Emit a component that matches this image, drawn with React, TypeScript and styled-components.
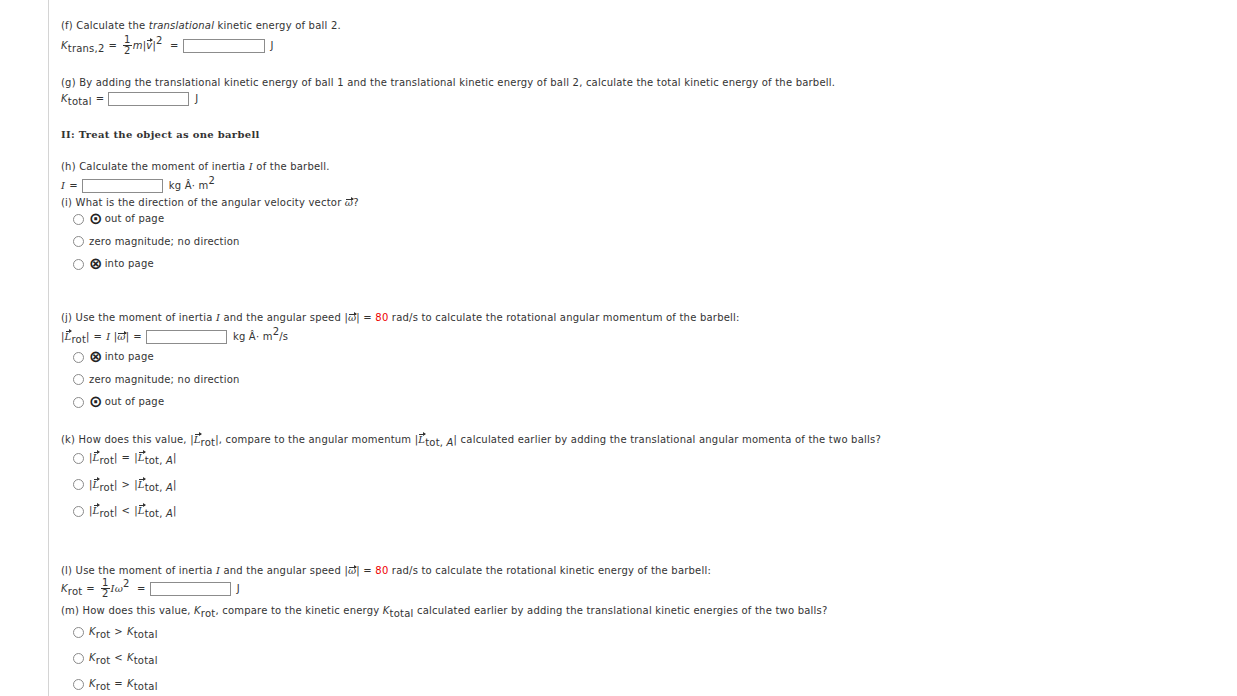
import React from 'react'
import styled, { createGlobalStyle } from 'styled-components'

//// global
const GlobalStyle = createGlobalStyle`
  html, body {
    margin: 0;
    padding: 0;
    background: #ffffff;
  }
  body {
    font-family: "DejaVu Sans", Verdana, sans-serif;
    font-size: 10px;
    letter-spacing: 0.21px;
    color: #333333;
  }
`

//// styles
const Page = styled.div`
  width: 1237px;
  height: 696px;
  overflow: hidden;
  box-sizing: border-box;
`

const Column = styled.div`
  margin-left: 48px;
  padding: 18px 0 40px 12px;
  border-left: 1px solid #d4d4d4;
  min-height: 696px;
  box-sizing: border-box;
`

const Part = styled.div<{ $mt?: number }>`
  margin-top: ${p => p.$mt ?? 0}px;
`

const Prompt = styled.div<{ $mt?: number }>`
  margin-top: ${p => p.$mt ?? 0}px;
  line-height: 16px;
  white-space: nowrap;
`

const Heading = styled.div<{ $mt?: number }>`
  margin-top: ${p => p.$mt ?? 0}px;
  font-family: "DejaVu Serif", Georgia, serif;
  font-weight: bold;
  font-size: 10px;
  letter-spacing: 0.3px;
  line-height: 16px;
`

const AnswerRow = styled.div<{ $mt?: number }>`
  margin-top: ${p => p.$mt ?? 0}px;
  line-height: 16px;
  white-space: nowrap;
`

const Eq = styled.span`
  margin: 0 4px;
`

const Input = styled.span<{ $w?: number }>`
  display: inline-block;
  width: ${p => p.$w ?? 80}px;
  height: 14px;
  box-sizing: border-box;
  border: 1px solid #8c8c8c;
  background: #fff;
  margin-right: 4px;
  vertical-align: middle;
`

const Unit = styled.span`
  margin-left: 2px;
`

const Var = styled.i`
  font-family: "DejaVu Sans", Verdana, sans-serif;
  font-style: italic;
`

const SerifVar = styled.i`
  font-family: "DejaVu Serif", Georgia, serif;
  font-style: italic;
`

const Sub = styled.sub`
  font-size: 10px;
  vertical-align: -3px;
  line-height: 0;
`

const Sup = styled.sup`
  font-size: 10px;
  vertical-align: 5px;
  line-height: 0;
`

const Red = styled.span`
  color: #ee0000;
`

const Frac = styled.span`
  display: inline-flex;
  flex-direction: column;
  align-items: center;
  font-size: 10px;
  line-height: 10px;
  margin: 0 1px 0 2px;
  vertical-align: middle;
`

const FracTop = styled.span`
  border-bottom: 1px solid #333;
  padding: 0 1px;
`

const Vec = styled.span<{ $lift?: number }>`
  position: relative;
  display: inline-block;
  line-height: 10px;
  &::before {
    content: '';
    position: absolute;
    left: 1px;
    right: 0;
    top: ${p => -1 + (p.$lift ?? 0)}px;
    height: 1px;
    background: #333;
  }
  &::after {
    content: '';
    position: absolute;
    right: -1px;
    top: ${p => -3 + (p.$lift ?? 0)}px;
    border-left: 3px solid #333;
    border-top: 2.5px solid transparent;
    border-bottom: 2.5px solid transparent;
  }
`

const Options = styled.div<{ $gap: number; $mt?: number }>`
  margin-top: ${p => p.$mt ?? 0}px;
  display: flex;
  flex-direction: column;
  gap: ${p => p.$gap}px;
  padding-left: 12px;
`

const Option = styled.label`
  display: flex;
  align-items: center;
  line-height: 16px;
  white-space: nowrap;
`

const OptionText = styled.span`
  display: inline-block;
`

const Radio = styled.span`
  width: 11px;
  height: 11px;
  box-sizing: border-box;
  border-radius: 50%;
  border: 1px solid #8a8a8a;
  background: #fff;
  margin-right: 5px;
  flex: 0 0 auto;
`

const DirGlyph = styled.span`
  font-size: 16px;
  font-weight: bold;
  line-height: 14px;
  margin-right: 2px;
  color: #222;
  vertical-align: -2px;
`

//// pieces
const Omega = () => (
  <Vec $lift={2}>
    <SerifVar>ω</SerifVar>
  </Vec>
)

const Lvec = () => (
  <Vec>
    <SerifVar>L</SerifVar>
  </Vec>
)

const Lrot = () => (
  <>
    |<Lvec />
    <Sub>rot</Sub>|
  </>
)

const LtotA = () => (
  <>
    |<Lvec />
    <Sub>
      tot, <Var>A</Var>
    </Sub>
    |
  </>
)

const Krot = () => (
  <>
    <Var>K</Var>
    <Sub>rot</Sub>
  </>
)

const Ktotal = () => (
  <>
    <Var>K</Var>
    <Sub>total</Sub>
  </>
)

const DirectionOptions: React.FC<{ order: ('out' | 'zero' | 'into')[]; mt: number }> = ({
  order,
  mt,
}) => (
  <Options $gap={6.5} $mt={mt}>
    {order.map(o => (
      <Option key={o}>
        <Radio />
        <OptionText>
          {o === 'out' && (
            <>
              <DirGlyph>⊙</DirGlyph>out of page
            </>
          )}
          {o === 'zero' && <>zero magnitude; no direction</>}
          {o === 'into' && (
            <>
              <DirGlyph>⊗</DirGlyph>into page
            </>
          )}
        </OptionText>
      </Option>
    ))}
  </Options>
)

const App: React.FC = () => {
  return (
    <Page>
      <GlobalStyle />
      <Column>
        {/* f */}
        <Part>
          <Prompt>
            (f) Calculate the <i>translational</i> kinetic energy of ball 2.
          </Prompt>
          <AnswerRow $mt={1}>
            <Var>K</Var>
            <Sub>trans,2</Sub>
            <Eq>=</Eq>
            <Frac>
              <FracTop>1</FracTop>
              <span>2</span>
            </Frac>
            <Var>m</Var>|<Vec>
              <Var>v</Var>
            </Vec>
            |<Sup>2</Sup>
            <Eq> =</Eq>
            <Input $w={82} />
            <Unit>J</Unit>
          </AnswerRow>
        </Part>

        {/* g */}
        <Part $mt={19}>
          <Prompt>
            (g) By adding the translational kinetic energy of ball 1 and the translational kinetic
            energy of ball 2, calculate the total kinetic energy of the barbell.
          </Prompt>
          <AnswerRow>
            <Ktotal />
            <Eq>=</Eq>
            <Input $w={81} />
            <Unit>J</Unit>
          </AnswerRow>
        </Part>

        <Heading $mt={20}>II: Treat the object as one barbell</Heading>

        {/* h, i */}
        <Part $mt={16}>
          <Prompt>
            (h) Calculate the moment of inertia <SerifVar>I</SerifVar> of the barbell.
          </Prompt>
          <AnswerRow $mt={3}>
            <SerifVar>I</SerifVar>
            <Eq>=</Eq>
            <Input $w={81} />
            <Unit>kg Â· m</Unit>
            <Sup>2</Sup>
          </AnswerRow>
          <Prompt $mt={1}>
            (i) What is the direction of the angular velocity vector <Omega />?
          </Prompt>
          <DirectionOptions order={['out', 'zero', 'into']} mt={0} />
        </Part>

        {/* j */}
        <Part $mt={38}>
          <Prompt>
            (j) Use the moment of inertia <SerifVar>I</SerifVar> and the angular speed |<Omega />|
            = <Red>80</Red> rad/s to calculate the rotational angular momentum of the barbell:
          </Prompt>
          <AnswerRow $mt={3}>
            <Lrot />
            <Eq>=</Eq>
            <SerifVar>I</SerifVar>&nbsp;|<Omega />|<Eq>=</Eq>
            <Input $w={81} />
            <Unit>kg Â· m</Unit>
            <Sup>2</Sup>/s
          </AnswerRow>
          <DirectionOptions order={['into', 'zero', 'out']} mt={4} />
        </Part>

        {/* k */}
        <Part $mt={22}>
          <Prompt>
            (k) How does this value, <Lrot />, compare to the angular momentum <LtotA /> calculated
            earlier by adding the translational angular momenta of the two balls?
          </Prompt>
          <Options $gap={10.5} $mt={2}>
            {['=', '>', '<'].map(op => (
              <Option key={op}>
                <Radio />
                <OptionText>
                  <Lrot />
                  <Eq>{op}</Eq>
                  <LtotA />
                </OptionText>
              </Option>
            ))}
          </Options>
        </Part>

        {/* l, m */}
        <Part $mt={44}>
          <Prompt>
            (l) Use the moment of inertia <SerifVar>I</SerifVar> and the angular speed |<Omega />|
            = <Red>80</Red> rad/s to calculate the rotational kinetic energy of the barbell:
          </Prompt>
          <AnswerRow $mt={-1}>
            <Krot />
            <Eq>=</Eq>
            <Frac>
              <FracTop>1</FracTop>
              <span>2</span>
            </Frac>
            <SerifVar>I</SerifVar>
            <SerifVar>ω</SerifVar>
            <Sup>2</Sup>
            <Eq> =</Eq>
            <Input $w={81} />
            <Unit>J</Unit>
          </AnswerRow>
          <Prompt $mt={4}>
            (m) How does this value, <Krot />, compare to the kinetic energy <Ktotal /> calculated
            earlier by adding the translational kinetic energies of the two balls?
          </Prompt>
          <Options $gap={10} $mt={5}>
            {['>', '<', '='].map(op => (
              <Option key={op}>
                <Radio />
                <OptionText>
                  <Krot />
                  <Eq>{op}</Eq>
                  <Ktotal />
                </OptionText>
              </Option>
            ))}
          </Options>
        </Part>
      </Column>
    </Page>
  )
}

export default App
